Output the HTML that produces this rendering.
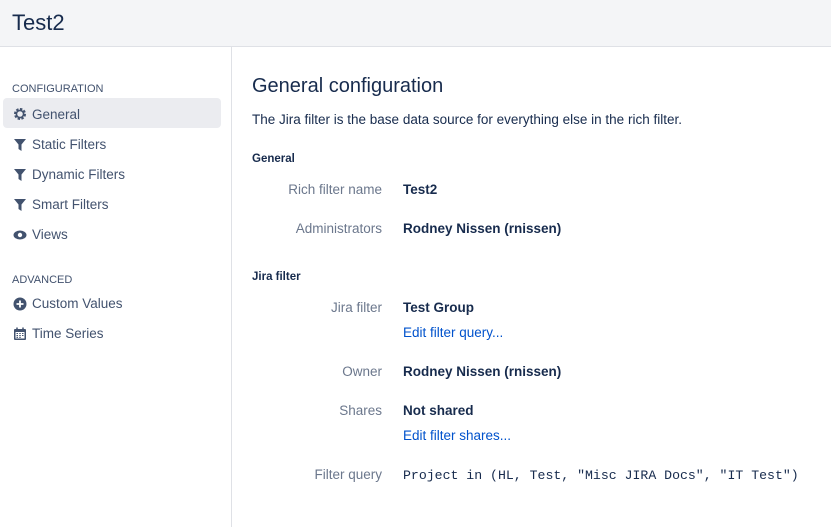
<!DOCTYPE html>
<html><head><style>
*{margin:0;padding:0;box-sizing:border-box}
body{width:831px;height:527px;overflow:hidden;background:#fff;font-family:"Liberation Sans",sans-serif;color:#172b4d;position:relative}
.hdr{position:absolute;left:0;top:0;width:831px;height:47px;background:#f4f5f7;border-bottom:1px solid #dfe1e6}
.hdr h1{position:absolute;left:12px;top:10px;font-size:22px;font-weight:normal;color:#172b4d}
.side{position:absolute;left:0;top:47px;width:232px;height:480px;border-right:1px solid #dfe1e6}
.sec{position:absolute;left:12px;font-size:11px;color:#42526e}
.item{position:absolute;left:3px;width:218px;height:30px;font-size:13.5px;color:#42526e;padding-left:29px;line-height:30px;border-radius:4px}
.item.act{background:#ebecf0}
.item svg{position:absolute;left:10px;top:8px}
.t{position:absolute;font-size:13.5px;white-space:nowrap}
.lbl{position:absolute;right:449px;font-size:13.5px;color:#6b778c;white-space:nowrap}
.val{position:absolute;left:403px;font-size:13.5px;font-weight:bold;white-space:nowrap}
.lnk{position:absolute;left:403px;font-size:13.5px;color:#0052cc;white-space:nowrap}
.sub{position:absolute;left:252px;font-size:11.5px;font-weight:bold}
</style></head><body>
<div class="hdr"><h1>Test2</h1></div>
<div class="side">
<div class="sec" style="top:36px">CONFIGURATION</div>
<div class="item act" style="top:51px;line-height:33px"><svg width="14" height="14" viewBox="0 0 14 14" style="top:9px"><circle cx="7" cy="7" r="4.5" fill="none" stroke="#42526e" stroke-width="3" stroke-dasharray="2.2 1.3"/><circle cx="7" cy="7" r="3.6" fill="none" stroke="#42526e" stroke-width="1.6"/></svg>General</div>
<div class="item" style="top:83px"><svg width="14" height="14" viewBox="0 0 14 14"><path d="M1 1h12L8.5 6.5V13L5.5 11V6.5z" fill="#42526e"/></svg>Static Filters</div>
<div class="item" style="top:113px"><svg width="14" height="14" viewBox="0 0 14 14"><path d="M1 1h12L8.5 6.5V13L5.5 11V6.5z" fill="#42526e"/></svg>Dynamic Filters</div>
<div class="item" style="top:143px"><svg width="14" height="14" viewBox="0 0 14 14"><path d="M1 1h12L8.5 6.5V13L5.5 11V6.5z" fill="#42526e"/></svg>Smart Filters</div>
<div class="item" style="top:173px"><svg width="14" height="14" viewBox="0 0 14 14"><ellipse cx="7" cy="7" rx="6.5" ry="4.5" fill="#42526e"/><circle cx="7" cy="7" r="2.2" fill="#fff"/></svg>Views</div>
<div class="sec" style="top:227px">ADVANCED</div>
<div class="item" style="top:242px"><svg width="14" height="14" viewBox="0 0 14 14"><circle cx="7" cy="7" r="6.5" fill="#42526e"/><path d="M7 3.5v7M3.5 7h7" stroke="#fff" stroke-width="1.8"/></svg>Custom Values</div>
<div class="item" style="top:272px"><svg width="14" height="14" viewBox="0 0 14 14"><rect x="1" y="2" width="12" height="11" rx="1" fill="#42526e"/><rect x="2.5" y="5" width="9" height="6.5" fill="#fff"/><path d="M3.5 6.5h1.5M6.25 6.5h1.5M9 6.5h1.5M3.5 8.5h1.5M6.25 8.5h1.5M9 8.5h1.5M3.5 10.3h1.5M6.25 10.3h1.5" stroke="#42526e" stroke-width="1.1"/><path d="M4 0.5v2.5M10 0.5v2.5" stroke="#42526e" stroke-width="1.5"/></svg>Time Series</div>
</div>
<div class="t" style="left:252px;top:75px;font-size:20px">General configuration</div>
<div class="t" style="left:252px;top:112px">The Jira filter is the base data source for everything else in the rich filter.</div>
<div class="sub" style="top:153px">General</div>
<div class="lbl" style="top:182px">Rich filter name</div><div class="val" style="top:182px">Test2</div>
<div class="lbl" style="top:221px">Administrators</div><div class="val" style="top:221px">Rodney Nissen (rnissen)</div>
<div class="sub" style="top:271px">Jira filter</div>
<div class="lbl" style="top:300px">Jira filter</div><div class="val" style="top:300px">Test Group</div>
<div class="lnk" style="top:325px">Edit filter query...</div>
<div class="lbl" style="top:364px">Owner</div><div class="val" style="top:364px">Rodney Nissen (rnissen)</div>
<div class="lbl" style="top:403px">Shares</div><div class="val" style="top:403px">Not shared</div>
<div class="lnk" style="top:428px">Edit filter shares...</div>
<div class="lbl" style="top:467px">Filter query</div>
<div class="t" style="left:403px;top:468px;font-family:'Liberation Mono',monospace;font-size:13.2px">Project in (HL, Test, "Misc JIRA Docs", "IT Test")</div>
</body></html>
